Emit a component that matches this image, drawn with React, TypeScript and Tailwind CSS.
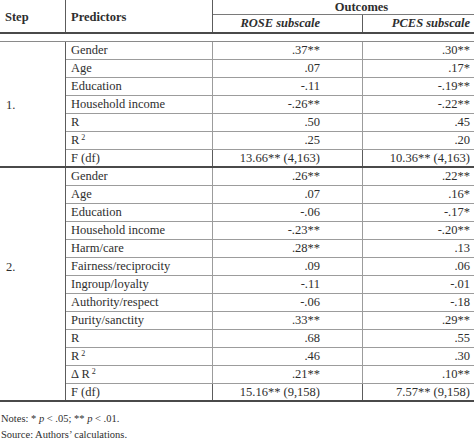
import React from 'react';

type Row = { label: React.ReactNode; rose: string; pces: string; step?: string };

const R2 = (
  <span>
    R<sup className="text-[8px] ml-[2px]">2</sup>
  </span>
);

const stepOne: Row[] = [
  { label: 'Gender', rose: '.37**', pces: '.30**' },
  { label: 'Age', rose: '.07', pces: '.17*' },
  { label: 'Education', rose: '-.11', pces: '-.19**' },
  { label: 'Household income', rose: '-.26**', pces: '-.22**', step: '1.' },
  { label: 'R', rose: '.50', pces: '.45' },
  { label: R2, rose: '.25', pces: '.20' },
  { label: 'F (df)', rose: '13.66** (4,163)', pces: '10.36** (4,163)' },
];

const stepTwo: Row[] = [
  { label: 'Gender', rose: '.26**', pces: '.22**' },
  { label: 'Age', rose: '.07', pces: '.16*' },
  { label: 'Education', rose: '-.06', pces: '-.17*' },
  { label: 'Household income', rose: '-.23**', pces: '-.20**' },
  { label: 'Harm/care', rose: '.28**', pces: '.13' },
  { label: 'Fairness/reciprocity', rose: '.09', pces: '.06', step: '2.' },
  { label: 'Ingroup/loyalty', rose: '-.11', pces: '-.01' },
  { label: 'Authority/respect', rose: '-.06', pces: '-.18' },
  { label: 'Purity/sanctity', rose: '.33**', pces: '.29**' },
  { label: 'R', rose: '.68', pces: '.55' },
  { label: R2, rose: '.46', pces: '.30' },
  { label: <span>Δ {R2}</span>, rose: '.21**', pces: '.10**' },
  { label: 'F (df)', rose: '15.16** (9,158)', pces: '7.57** (9,158)' },
];

const TableRow = ({ row, last }: { row: Row; last: boolean }) => {
  const line = last ? '' : 'border-b border-[#9c9c9c]';
  return (
    <div className={`grid grid-cols-[66px_147px_150px_147px] ${last ? 'h-[16px]' : 'h-[18px]'}`}>
      <div className="border-r border-[#5c5c5c] pl-[6px] flex items-center">{row.step}</div>
      <div className={`border-r border-[#5c5c5c] pl-[5px] flex items-center ${line}`}>{row.label}</div>
      <div className={`border-r border-[#5c5c5c] pr-[42px] flex items-center justify-end ${line}`}>{row.rose}</div>
      <div className={`pr-[40px] flex items-center justify-end ${line}`}>{row.pces}</div>
    </div>
  );
};

const Group = ({ rows }: { rows: Row[] }) => (
  <div className="border-b-2 border-[#4a4a4a]">
    {rows.map((r, i) => (
      <TableRow key={i} row={r} last={i === rows.length - 1} />
    ))}
  </div>
);

export default function App() {
  return (
    <div className="w-[474px] h-[441px] overflow-hidden bg-white text-[#2e2e2e] font-['Liberation_Serif',serif] text-[12.5px] leading-none">
      <div className="w-[510px]">
        {/* Header */}
        <div className="grid grid-cols-[66px_147px_297px] h-[34px] border-b-2 border-[#4a4a4a] font-bold">
          <div className="border-r border-[#5c5c5c] pl-[5px] pt-[2px] flex items-center">Step</div>
          <div className="border-r border-[#5c5c5c] pl-[5px] pt-[2px] flex items-center">Predictors</div>
          <div className="flex flex-col">
            <div className="h-[15px] border-b border-[#7a7a7a] flex items-center justify-center">Outcomes</div>
            <div className="flex-1 grid grid-cols-[150px_147px] italic">
              <div className="border-r border-[#5c5c5c] pr-[42px] flex items-center justify-end">ROSE subscale</div>
              <div className="pr-[40px] flex items-center justify-end">PCES subscale</div>
            </div>
          </div>
        </div>
        <div className="h-[8px] border-b border-[#8a8a8a]" />

        <Group rows={stepOne} />
        <Group rows={stepTwo} />
      </div>

      <div className="pt-[9px] text-[10.5px] leading-[16px] pl-[1px]">
        <div>
          Notes: * <i>p</i> &lt; .05; ** <i>p</i> &lt; .01.
        </div>
        <div>Source: Authors’ calculations.</div>
      </div>
    </div>
  );
}
